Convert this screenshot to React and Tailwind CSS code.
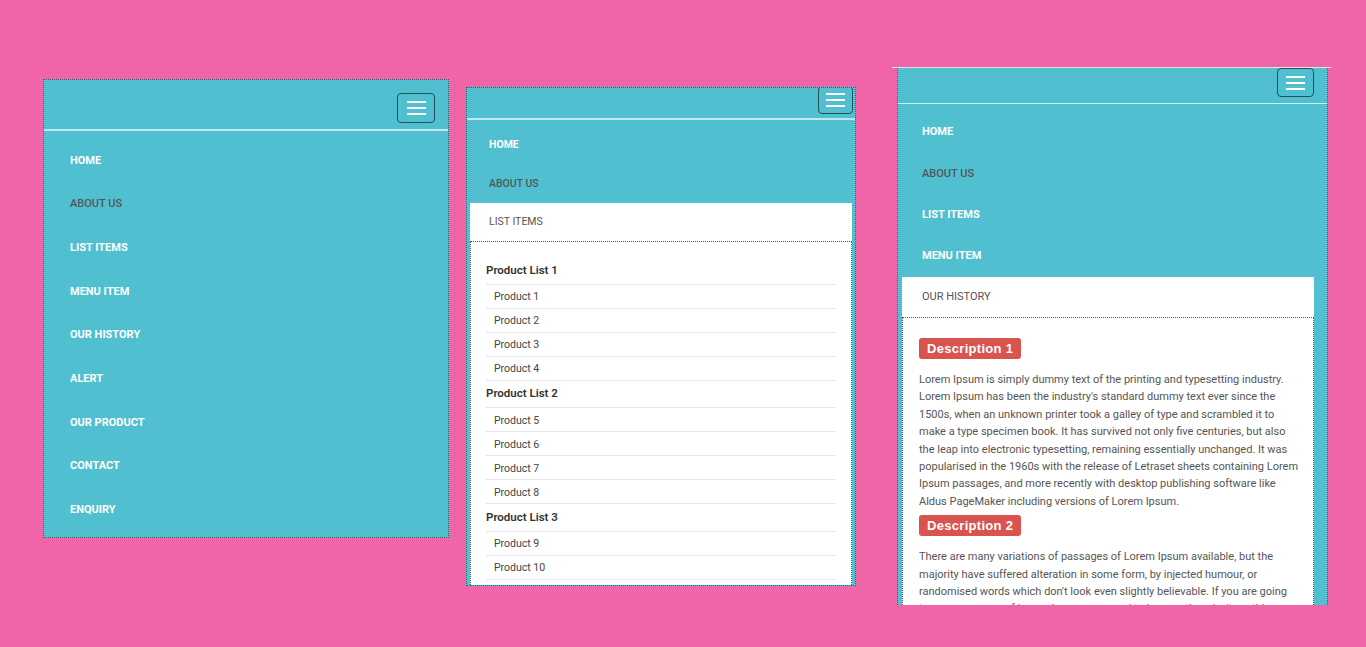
import React from "react";

const menu = [
  "HOME",
  "ABOUT US",
  "LIST ITEMS",
  "MENU ITEM",
  "OUR HISTORY",
  "ALERT",
  "OUR PRODUCT",
  "CONTACT",
  "ENQUIRY",
];

const productLists = [
  { title: "Product List 1", items: ["Product 1", "Product 2", "Product 3", "Product 4"] },
  { title: "Product List 2", items: ["Product 5", "Product 6", "Product 7", "Product 8"] },
  { title: "Product List 3", items: ["Product 9", "Product 10", "Product 11", "Product 12"] },
];

function Burger({ className }) {
  return (
    <button
      type="button"
      className={`flex flex-col items-center justify-center gap-[4px] rounded-[4px] border border-[#24505a] bg-transparent ${className}`}
    >
      <span className="block h-[2px] w-[19px] bg-white" />
      <span className="block h-[2px] w-[19px] bg-white" />
      <span className="block h-[2px] w-[19px] bg-white" />
    </button>
  );
}

function PanelOne() {
  return (
    <div className="ml-[43px] mt-[79px] h-[459px] w-[406px] shrink-0 border border-dotted border-[#3b5f66] bg-[#50c0d0]">
      <div className="flex h-[51px] justify-end border-b-2 border-[#bfe7ed] pr-[13px] pt-[13px]">
        <Burger className="h-[30px] w-[38px]" />
      </div>
      <ul className="pb-[4px] pt-[8px]">
        {menu.map((m) => (
          <li
            key={m}
            className={`flex h-[43.7px] items-center pl-[26px] text-[11px] ${
              m === "ABOUT US" ? "font-medium text-[#555]" : "font-bold text-white"
            }`}
          >
            {m}
          </li>
        ))}
      </ul>
    </div>
  );
}

function PanelTwo() {
  return (
    <div className="ml-[17px] mt-[87px] h-[499px] w-[390px] shrink-0 overflow-hidden border border-dotted border-[#3b5f66] bg-[#50c0d0]">
      <div className="flex h-[32px] justify-end border-b-2 border-[#bfe7ed] pr-[2px]">
        <Burger className="-mt-[2px] h-[28px] w-[35px]" />
      </div>
      <ul className="mx-[3px] pt-[6px]">
        <li className="flex h-[38.5px] items-center pl-[19px] text-[10.5px] font-bold text-white">HOME</li>
        <li className="flex h-[38.5px] items-center pl-[19px] text-[10.5px] font-medium text-[#555]">ABOUT US</li>
        <li className="flex h-[38px] items-center bg-white pl-[19px] text-[10.5px] text-[#555]">LIST ITEMS</li>
      </ul>
      <div className="mx-[3px] h-[400px] border-x border-t border-dotted border-[#3b5f66] bg-white px-[15px] pt-[15px]">
        {productLists.map((list) => (
          <div key={list.title}>
            <div className="flex h-[27.5px] items-center border-b border-[#e6e6e6] text-[11.5px] font-semibold text-[#333]">
              {list.title}
            </div>
            {list.items.map((p) => (
              <div
                key={p}
                className="flex h-[24px] items-center border-b border-[#e6e6e6] pl-[8px] pt-[2px] text-[10.5px] text-[#444]"
              >
                {p}
              </div>
            ))}
          </div>
        ))}
      </div>
    </div>
  );
}

function Badge({ children }) {
  return (
    <span className="inline-block h-[21px] rounded-[3px] bg-[#d9534f] px-[8px] font-['Liberation_Sans',Arial,sans-serif] text-[13px] font-bold leading-[21px] tracking-[0.3px] text-white">
      {children}
    </span>
  );
}

function PanelThree() {
  return (
    <div className="ml-[36px] mt-[67px] flex shrink-0 flex-col">
      <div className="h-px w-[439px] bg-[#e4e4e4]" />
      <div className="ml-[5px] h-[537px] w-[431px] overflow-hidden border-x border-dotted border-[#3b5f66] bg-[#50c0d0]">
        <div className="flex h-[36px] justify-end border-b border-[#d2f0f4] pr-[13px]">
          <Burger className="h-[29px] w-[37px]" />
        </div>
        <ul className="ml-[4px] mr-[13px] pt-[8px]">
          <li className="flex h-[41.3px] items-center pl-[20px] text-[11px] font-bold text-white">HOME</li>
          <li className="flex h-[41.3px] items-center pl-[20px] text-[11px] font-medium text-[#555]">ABOUT US</li>
          <li className="flex h-[41.3px] items-center pl-[20px] text-[11px] font-bold text-white">LIST ITEMS</li>
          <li className="flex h-[41px] items-center pl-[20px] text-[11px] font-bold text-white">MENU ITEM</li>
          <li className="flex h-[40px] items-center bg-white pl-[20px] text-[11px] text-[#555]">OUR HISTORY</li>
        </ul>
        <div className="ml-[4px] mr-[13px] h-[300px] border-x border-t border-dotted border-[#3b5f66] bg-white pl-[16px] pr-[12px] pt-[20px] text-[11px] leading-[17.4px] text-[#555]">
          <Badge>Description 1</Badge>
          <p className="mt-[12px]">
            Lorem Ipsum is simply dummy text of the printing and typesetting industry. Lorem Ipsum has been the
            industry's standard dummy text ever since the 1500s, when an unknown printer took a galley of type and
            scrambled it to make a type specimen book. It has survived not only five centuries, but also the leap
            into electronic typesetting, remaining essentially unchanged. It was popularised in the 1960s with the
            release of Letraset sheets containing Lorem Ipsum passages, and more recently with desktop publishing
            software like Aldus PageMaker including versions of Lorem Ipsum.
          </p>
          <div className="mt-[5px]">
            <Badge>Description 2</Badge>
          </div>
          <p className="mr-[5px] mt-[12px]">
            There are many variations of passages of Lorem Ipsum available, but the majority have suffered
            alteration in some form, by injected humour, or randomised words which don't look even slightly
            believable. If you are going to use a passage of Lorem Ipsum, you need to be sure there isn't anything
            embarrassing hidden in the middle of text.
          </p>
        </div>
      </div>
    </div>
  );
}

export default function App() {
  return (
    <div className="flex h-[647px] w-[1366px] items-start overflow-hidden bg-[#f064a8] font-['Roboto',sans-serif]">
      <PanelOne />
      <PanelTwo />
      <PanelThree />
    </div>
  );
}
